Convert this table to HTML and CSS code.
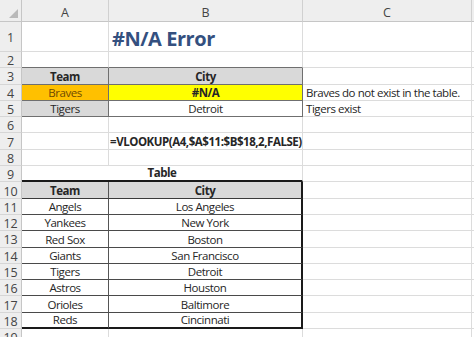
FILE: index.html
```html
<!DOCTYPE html>
<html>
<head>
<meta charset="utf-8">
<link rel="stylesheet" href="styles.css">
</head>
<body>
<div class="sheet">
  <div class="corner"><span class="tri"></span></div>
  <div class="ch">A</div><div class="ch">B</div><div class="ch">C</div><div class="ch edge"></div>

  <div class="rh">1</div><div class="c"></div><div class="c title">#N/A Error</div><div class="c"></div><div class="c edge"></div>
  <div class="rh">2</div><div class="c t1top"></div><div class="c t1top"></div><div class="c"></div><div class="c edge"></div>
  <div class="rh">3</div><div class="c ctr b gray t1">Team</div><div class="c ctr b gray t1">City</div><div class="c"></div><div class="c edge"></div>
  <div class="rh">4</div><div class="c ctr orange t1">Braves</div><div class="c ctr b yellow t1">#N/A</div><div class="c lft">Braves do not exist in the table.</div><div class="c edge"></div>
  <div class="rh">5</div><div class="c ctr gray t1">Tigers</div><div class="c ctr t1">Detroit</div><div class="c lft">Tigers exist</div><div class="c edge"></div>
  <div class="rh">6</div><div class="c"></div><div class="c"></div><div class="c"></div><div class="c edge"></div>
  <div class="rh">7</div><div class="c"></div><div class="c lft b formula">=VLOOKUP(A4,$A$11:$B$18,2,FALSE)</div><div class="c"></div><div class="c edge"></div>
  <div class="rh">8</div><div class="c"></div><div class="c"></div><div class="c"></div><div class="c edge"></div>
  <div class="rh">9</div><div class="c ctr b merge t2top">Table</div><div class="c"></div><div class="c edge"></div>
  <div class="rh">10</div><div class="c ctr b gray t2 head">Team</div><div class="c ctr b gray t2 r head">City</div><div class="c"></div><div class="c edge"></div>
  <div class="rh">11</div><div class="c ctr t2">Angels</div><div class="c ctr t2 r">Los Angeles</div><div class="c"></div><div class="c edge"></div>
  <div class="rh">12</div><div class="c ctr t2">Yankees</div><div class="c ctr t2 r">New York</div><div class="c"></div><div class="c edge"></div>
  <div class="rh">13</div><div class="c ctr t2">Red Sox</div><div class="c ctr t2 r">Boston</div><div class="c"></div><div class="c edge"></div>
  <div class="rh">14</div><div class="c ctr t2">Giants</div><div class="c ctr t2 r">San Francisco</div><div class="c"></div><div class="c edge"></div>
  <div class="rh">15</div><div class="c ctr t2">Tigers</div><div class="c ctr t2 r">Detroit</div><div class="c"></div><div class="c edge"></div>
  <div class="rh">16</div><div class="c ctr t2">Astros</div><div class="c ctr t2 r">Houston</div><div class="c"></div><div class="c edge"></div>
  <div class="rh">17</div><div class="c ctr t2">Orioles</div><div class="c ctr t2 r">Baltimore</div><div class="c"></div><div class="c edge"></div>
  <div class="rh">18</div><div class="c ctr t2 last">Reds</div><div class="c ctr t2 r last">Cincinnati</div><div class="c"></div><div class="c edge"></div>
  <div class="rh">19</div><div class="c"></div><div class="c"></div><div class="c"></div><div class="c edge"></div>
</div>
</body>
</html>
```
FILE: styles.css
```css
html, body {
  margin: 0;
  padding: 0;
  background: #ffffff;
  overflow: hidden;
}
.sheet {
  display: grid;
  grid-template-columns: 22px 87px 194px 169px 10px;
  grid-template-rows: 22px 30px repeat(18, 16.3px);
  font-family: "Open Sans", "Noto Sans", sans-serif;
  font-size: 11.5px;
  letter-spacing: -0.45px;
  color: #262626;
  width: 482px;
}
.sheet > div {
  box-sizing: border-box;
  border-right: 1px solid #dcdcdc;
  border-bottom: 1px solid #dcdcdc;
  display: flex;
  align-items: flex-end;
  line-height: 15px;
  white-space: nowrap;
  overflow: visible;
}
.sheet > .corner {
  background: #eeeeee;
  border-right: 1px solid #c6c6c6;
  border-bottom: 1px solid #c6c6c6;
  position: relative;
}
.tri {
  position: absolute;
  right: 3px;
  bottom: 3px;
  width: 0;
  height: 0;
  border-left: 9px solid transparent;
  border-bottom: 9px solid #b9b9b9;
}
.sheet > .ch {
  background: #eeeeee;
  justify-content: center;
  align-items: center;
  color: #444444;
  font-size: 12.5px;
  letter-spacing: 0;
  padding-top: 3px;
  border-right: 1px solid #d0d0d0;
  border-bottom: 1px solid #c6c6c6;
}
.sheet > .rh {
  background: #eeeeee;
  justify-content: center;
  align-items: center;
  color: #444444;
  font-size: 12.5px;
  line-height: 13px;
  letter-spacing: -0.2px;
  padding-top: 2px;
  overflow: hidden;
  border-right: 1px solid #c6c6c6;
  border-bottom: 1px solid #d6d6d6;
}
.sheet > .edge {
  border-right: none;
}
.ctr { justify-content: center; }
.lft { justify-content: flex-start; padding-left: 3px; }
.b { font-weight: 700; }
.sheet > .title {
  font-size: 20px;
  font-weight: 700;
  color: #34507f;
  letter-spacing: -0.45px;
  padding-left: 3px;
  align-items: center;
  padding-top: 3px;
}
.formula { padding-left: 1px; }
.gray { background: #d9d9d9; }
.orange { background: #ffc000; color: #6e4a00; }
.yellow { background: #ffff00; }
.sheet > .t1 {
  border-right: 1px solid #6f6f6f;
  border-bottom: 1px solid #6f6f6f;
}
.sheet > .t1top {
  border-bottom: 1px solid #6f6f6f;
}
.sheet > .merge {
  grid-column: span 2;
}
.sheet > .t2top {
  border-bottom: 2px solid #1a1a1a;
}
.sheet > .t2 {
  border-right: 1px solid #555555;
  border-bottom: 1.5px solid #4a4a4a;
}
.sheet > .t2.r {
  border-right: 2px solid #1a1a1a;
}
.sheet > .t2.head {
  border-bottom: 1.5px solid #3a3a3a;
}
.sheet > .t2.last {
  border-bottom: 2px solid #1a1a1a;
}
```
